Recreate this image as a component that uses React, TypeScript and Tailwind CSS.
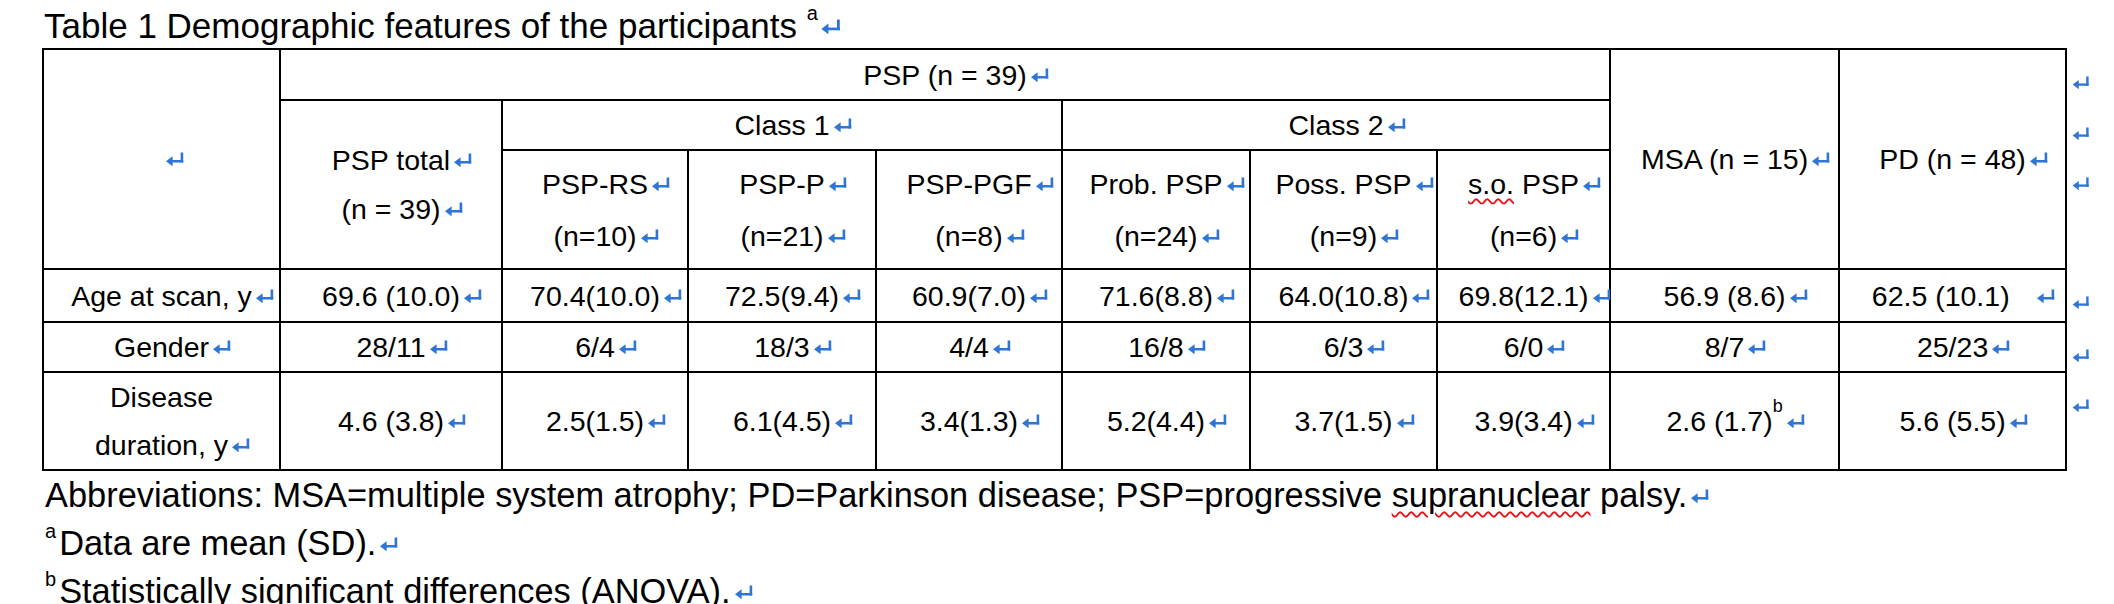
import type { ReactNode } from "react";

function ReturnMark({ className = "" }: { className?: string }) {
  return (
    <svg viewBox="0 0 18 14" className={`inline-block ${className}`} fill="#2e75d6">
      <rect x="14.6" y="0.5" width="2.6" height="10" />
      <rect x="5" y="8" width="12.2" height="2.5" />
      <polygon points="0,9.25 6.6,4.25 6.6,14.25" />
    </svg>
  );
}

// mark that hangs after centred text without shifting it
function Hang() {
  return <ReturnMark className="w-[18px] h-[14px] ml-[4px] -mr-[22px] align-[3px]" />;
}

function Wavy({ children }: { children: ReactNode }) {
  return (
    <span className="underline decoration-wavy decoration-[#e8141c] decoration-[1.5px] underline-offset-[4px]">
      {children}
    </span>
  );
}

const cell = "border-2 border-black p-0 text-center align-middle whitespace-nowrap";
const endCell = "border-0 p-0 pl-[5px] pt-[17px] align-top text-left leading-none";

function RowEnd() {
  return (
    <td className={endCell}>
      <ReturnMark className="w-[18px] h-[13px]" />
    </td>
  );
}

function TwoLine({ top, bottom }: { top: ReactNode; bottom: ReactNode }) {
  return (
    <>
      <div className="leading-[52px]">
        {top}
        <Hang />
      </div>
      <div className="leading-[52px]">
        {bottom}
        <Hang />
      </div>
    </>
  );
}

const ages = ["69.6 (10.0)", "70.4(10.0)", "72.5(9.4)", "60.9(7.0)", "71.6(8.8)", "64.0(10.8)", "69.8(12.1)", "56.9 (8.6)", "62.5 (10.1)\u00a0\u00a0\u00a0"];
const genders = ["28/11", "6/4", "18/3", "4/4", "16/8", "6/3", "6/0", "8/7", "25/23"];
const durations = ["4.6 (3.8)", "2.5(1.5)", "6.1(4.5)", "3.4(1.3)", "5.2(4.4)", "3.7(1.5)", "3.9(3.4)", "2.6 (1.7)", "5.6 (5.5)"];

export default function App() {
  return (
    <div className="w-[2114px] h-[604px] overflow-hidden bg-white text-black font-['Liberation_Sans',sans-serif]">
      <div className="pl-[44px] pt-[3px] text-[35px] leading-[40px] whitespace-nowrap">
        Table 1 Demographic features of the participants{" "}
        <span className="text-[20px] leading-none align-[18px]">a</span>
        <ReturnMark className="w-[20px] h-[15px] ml-[3px] align-[4px]" />
      </div>

      <table className="ml-[42px] mt-[2px] w-[2068px] table-fixed border-collapse text-[28.5px] leading-[48px]">
        <colgroup>
          <col className="w-[237px]" />
          <col className="w-[222px]" />
          <col className="w-[186px]" />
          <col className="w-[188px]" />
          <col className="w-[186px]" />
          <col className="w-[188px]" />
          <col className="w-[187px]" />
          <col className="w-[173px]" />
          <col className="w-[229px]" />
          <col className="w-[227px]" />
          <col className="w-[45px]" />
        </colgroup>
        <tbody>
          <tr className="h-[51px]">
            <td rowSpan={3} className={cell}>
              <Hang />
            </td>
            <td colSpan={7} className={cell}>
              PSP (n = 39)
              <Hang />
            </td>
            <td rowSpan={3} className={cell}>
              MSA (n = 15)
              <Hang />
            </td>
            <td rowSpan={3} className={cell}>
              PD (n = 48)
              <Hang />
            </td>
            <RowEnd />
          </tr>
          <tr className="h-[50px]">
            <td rowSpan={2} className={cell}>
              <div className="leading-[48.5px]">
                PSP total
                <Hang />
              </div>
              <div className="leading-[48.5px]">
                (n = 39)
                <Hang />
              </div>
            </td>
            <td colSpan={3} className={cell}>
              Class 1
              <Hang />
            </td>
            <td colSpan={3} className={cell}>
              Class 2
              <Hang />
            </td>
            <RowEnd />
          </tr>
          <tr className="h-[119px]">
            <td className={cell}>
              <TwoLine top="PSP-RS" bottom="(n=10)" />
            </td>
            <td className={cell}>
              <TwoLine top="PSP-P" bottom="(n=21)" />
            </td>
            <td className={cell}>
              <TwoLine top="PSP-PGF" bottom="(n=8)" />
            </td>
            <td className={cell}>
              <TwoLine top="Prob. PSP" bottom="(n=24)" />
            </td>
            <td className={cell}>
              <TwoLine top="Poss. PSP" bottom="(n=9)" />
            </td>
            <td className={cell}>
              <TwoLine
                top={
                  <>
                    <Wavy>s.o.</Wavy> PSP
                  </>
                }
                bottom="(n=6)"
              />
            </td>
            <RowEnd />
          </tr>

          <tr className="h-[53px]">
            <td className={cell}>
              Age at scan, y
              <Hang />
            </td>
            {ages.map((v, i) => (
              <td key={i} className={cell}>
                {v}
                <Hang />
              </td>
            ))}
            <RowEnd />
          </tr>
          <tr className="h-[50px]">
            <td className={cell}>
              Gender
              <Hang />
            </td>
            {genders.map((v, i) => (
              <td key={i} className={cell}>
                {v}
                <Hang />
              </td>
            ))}
            <RowEnd />
          </tr>
          <tr className="h-[98px]">
            <td className={cell}>
              <div>Disease</div>
              <div>
                duration, y
                <Hang />
              </div>
            </td>
            {durations.map((v, i) => (
              <td key={i} className={cell}>
                {v}
                {i === 7 && <span className="text-[18px] leading-none align-[19px]">b</span>}
                <Hang />
              </td>
            ))}
            <RowEnd />
          </tr>
        </tbody>
      </table>

      <div className="pl-[45px] text-[34.4px] leading-[48px] whitespace-nowrap">
        <div>
          Abbreviations: MSA=multiple system atrophy; PD=Parkinson disease; PSP=progressive{" "}
          <Wavy>supranuclear</Wavy> palsy.
          <ReturnMark className="w-[20px] h-[14px] ml-[3px] align-[4px]" />
        </div>
        <div>
          <span className="text-[20px] leading-none align-[17px] pr-[3px]">a</span>
          Data are mean (SD).
          <ReturnMark className="w-[20px] h-[14px] ml-[3px] align-[4px]" />
        </div>
        <div>
          <span className="text-[20px] leading-none align-[17px] pr-[3px]">b</span>
          Statistically significant differences (ANOVA).
          <ReturnMark className="w-[20px] h-[14px] ml-[3px] align-[4px]" />
        </div>
      </div>
    </div>
  );
}
